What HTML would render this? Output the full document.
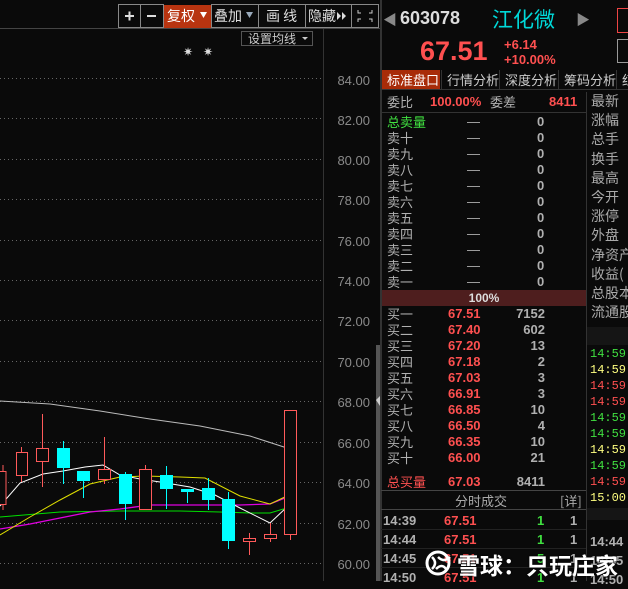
<!DOCTYPE html>
<html><head><meta charset="utf-8"><style>
*{margin:0;padding:0;box-sizing:border-box}
body{width:628px;height:581px;background:#0a0a0a;overflow:hidden;position:relative;font-family:"Liberation Sans","Noto Sans CJK SC",sans-serif;color:#c0c0c0}
.a{position:absolute;white-space:nowrap}
.cn{font-family:"Noto Sans CJK SC","WenQuanYi Zen Hei",sans-serif}
.btn{position:absolute;top:4px;height:24px;border:1px solid #888;color:#ddd;font-size:14px;line-height:22px;text-align:center;font-family:"Noto Sans CJK SC",sans-serif;white-space:nowrap;overflow:hidden}
.r{color:#ff5050}.g{color:#40e040}.y{color:#ffff80}.gr{color:#b0b0b0}
.ob{position:absolute;font-size:13px;line-height:16px;height:16px}
.mono{font-family:"Liberation Mono","DejaVu Sans Mono",monospace}
</style></head><body>
<svg class="a" style="left:0;top:0" width="381" height="581">
<line x1="0" y1="28.5" x2="381" y2="28.5" stroke="#444"/>
<line x1="323.5" y1="29" x2="323.5" y2="581" stroke="#333"/>
<rect x="376" y="345" width="4" height="236" fill="#555"/>
<g stroke="#666" stroke-dasharray="1,3">
<line x1="0" y1="78.5" x2="323" y2="78.5"/><line x1="0" y1="118.5" x2="323" y2="118.5"/><line x1="0" y1="159.5" x2="323" y2="159.5"/><line x1="0" y1="199.5" x2="323" y2="199.5"/><line x1="0" y1="240.5" x2="323" y2="240.5"/><line x1="0" y1="280.5" x2="323" y2="280.5"/><line x1="0" y1="320.5" x2="323" y2="320.5"/><line x1="0" y1="361.5" x2="323" y2="361.5"/><line x1="0" y1="401.5" x2="323" y2="401.5"/><line x1="0" y1="442.5" x2="323" y2="442.5"/><line x1="0" y1="482.5" x2="323" y2="482.5"/><line x1="0" y1="523.5" x2="323" y2="523.5"/><line x1="0" y1="563.5" x2="323" y2="563.5"/>
</g>
<g font-family="Liberation Sans" font-size="13" fill="#8a8a8a" text-anchor="end">
<text x="370" y="85">84.00</text><text x="370" y="125">82.00</text><text x="370" y="165">80.00</text><text x="370" y="205">78.00</text><text x="370" y="246">76.00</text><text x="370" y="286">74.00</text><text x="370" y="326">72.00</text><text x="370" y="367">70.00</text><text x="370" y="407">68.00</text><text x="370" y="448">66.00</text><text x="370" y="488">64.00</text><text x="370" y="529">62.00</text><text x="370" y="569">60.00</text>
</g>
<polyline fill="none" stroke="#bbb" points="0,401 50,404 100,411 150,419 200,426 250,436 287,448"/>
<polyline fill="none" stroke="#00e000" points="0,517 60,512 120,511 180,511 220,512 250,513 270,513 290,507"/>
<polyline fill="none" stroke="#e000e0" stroke-width="1.3" points="0,529 30,524 60,518 90,512 120,509 150,505 180,505 210,505 240,505 270,504 290,496"/>
<polyline fill="none" stroke="#e0e000" points="0,535 30,517 60,500 90,484 120,477 145,476 180,477 205,478 240,496 270,504 287,496"/>
<polyline fill="none" stroke="#fff" points="0,506 20,483 43,474 63,471 85,467 103,465 120,475 140,479 160,482 190,487 215,495 240,508 270,523 287,507"/>
<g stroke="#ff5a5a" fill="#0a0a0a">
<line x1="3" y1="465" x2="3" y2="510"/><rect x="-5" y="471.5" width="11" height="33"/>
<line x1="21.5" y1="447" x2="21.5" y2="482"/><rect x="16.5" y="452.5" width="11" height="23"/>
<line x1="42.5" y1="414" x2="42.5" y2="487"/><rect x="36.5" y="448.5" width="12" height="13"/>
<line x1="104.5" y1="437" x2="104.5" y2="484"/><rect x="98.5" y="469.5" width="12" height="10"/>
<line x1="145.5" y1="465" x2="145.5" y2="510"/><rect x="139.5" y="469.5" width="12" height="40"/>
<line x1="249.5" y1="533" x2="249.5" y2="555"/><rect x="243.5" y="538.5" width="12" height="3"/>
<line x1="270.5" y1="523" x2="270.5" y2="542"/><rect x="264.5" y="534.5" width="12" height="4"/>
<line x1="290.5" y1="534" x2="290.5" y2="540"/><rect x="284.5" y="410.5" width="12" height="124"/>
</g>
<g fill="#00ffff" stroke="#00ffff">
<line x1="63.5" y1="441" x2="63.5" y2="484"/><rect x="57" y="448" width="13" height="20" stroke="none"/>
<line x1="83.5" y1="471" x2="83.5" y2="498"/><rect x="77" y="471" width="13" height="10" stroke="none"/>
<line x1="125.5" y1="472" x2="125.5" y2="520"/><rect x="119" y="474" width="13" height="30" stroke="none"/>
<line x1="166.5" y1="466" x2="166.5" y2="509"/><rect x="160" y="475" width="13" height="14" stroke="none"/>
<line x1="187.5" y1="489" x2="187.5" y2="503"/><rect x="181" y="489" width="13" height="3" stroke="none"/>
<line x1="208.5" y1="478" x2="208.5" y2="510"/><rect x="202" y="488" width="13" height="12" stroke="none"/>
<line x1="228.5" y1="492" x2="228.5" y2="549"/><rect x="222" y="499" width="13" height="42" stroke="none"/>
</g>
<rect x="241.5" y="31.5" width="71" height="14" fill="none" stroke="#555"/>
<text x="248" y="43" font-size="12" fill="#ccc" font-family="Noto Sans CJK SC">设置均线</text>
<path d="M302 37h6l-3 3z" fill="#ccc"/>
<text x="188" y="56" font-size="12" fill="#ddd" text-anchor="middle">✷</text>
<text x="208" y="56" font-size="12" fill="#ddd" text-anchor="middle">✷</text>
<path d="M376 400l4 -4v10z" fill="#ccc"/>
<g stroke="#888" fill="none">
<rect x="118.5" y="4.5" width="22" height="23"/><rect x="140.5" y="4.5" width="23" height="23"/>
<rect x="211.5" y="4.5" width="47" height="23"/><rect x="258.5" y="4.5" width="47" height="23"/>
<rect x="305.5" y="4.5" width="46" height="23"/><rect x="351.5" y="4.5" width="27" height="23"/>
</g>
<rect x="164" y="5" width="47" height="23" fill="#b83410"/>
<path d="M125 16h9M129.5 11.5v9" stroke="#ddd" stroke-width="2"/>
<path d="M147 16h9" stroke="#ddd" stroke-width="2"/>
<path d="M200 12h7l-3.5 6z" fill="#fff"/>
<path d="M246 12h7l-3.5 6z" fill="#9ab"/>
<path d="M337 12l4 4-4 4zM342 12l4 4-4 4z" fill="#ddd"/>
<path d="M358 10v3h3M372 10v3h-3M358 22v-3h3M372 22v-3h-3" stroke="#ccc" fill="none"/>
<g font-family="Noto Sans CJK SC" font-size="14" fill="#ddd">
<text x="167" y="21" fill="#fff">复权</text>
<text x="214" y="21">叠加</text>
<text x="266" y="21">画 线</text>
<text x="308" y="21">隐藏</text>
</g>
</svg>

<div class="a" style="left:380px;top:0;width:2px;height:581px;background:#333"></div>
<div class="a" style="left:586px;top:92px;width:1px;height:489px;background:#333"></div>
<div class="a" style="left:381px;top:89px;width:247px;height:1px;background:#333"></div>
<div class="a" style="left:383px;top:10px;font-size:14px;color:#888">◀</div>
<div class="a" style="left:400px;top:8px;font-size:18px;font-weight:bold;color:#ddd">603078</div>
<div class="a cn" style="left:492px;top:4px;font-size:21px;color:#00d8d8">江化微</div>
<div class="a" style="left:576px;top:10px;font-size:14px;color:#888">▶</div>
<div class="a" style="left:617px;top:8px;width:14px;height:25px;border:1px solid #e44"></div>
<div class="a" style="left:617px;top:39px;width:14px;height:24px;border:1px solid #999"></div>
<div class="a" style="left:420px;top:36px;font-size:27px;font-weight:bold;color:#ff5050">67.51</div>
<div class="a" style="left:504px;top:37px;font-size:13px;font-weight:bold;color:#ff5050;line-height:15px">+6.14<br>+10.00%</div>
<div class="a cn" style="left:381px;top:70px;width:247px;height:20px;font-size:13px;line-height:19px;color:#ccc">
<span class="a" style="left:1px;width:58px;height:19px;background:#a82c08;color:#fff;padding-left:5px">标准盘口</span>
<span class="a" style="left:60px;padding-left:5px;border-left:1px solid #333">行情分析</span>
<span class="a" style="left:118px;padding-left:5px;border-left:1px solid #333">深度分析</span>
<span class="a" style="left:177px;padding-left:5px;border-left:1px solid #333">筹码分析</span>
<span class="a" style="left:235px;padding-left:5px;border-left:1px solid #333">红</span>
</div>
<div class="a" style="left:381px;top:112px;width:205px;height:1px;background:#333"></div>
<div class="ob cn gr" style="left:387px;top:94px">委比</div>
<div class="ob r" style="left:430px;top:94px;font-weight:bold">100.00%</div>
<div class="ob cn gr" style="left:490px;top:94px">委差</div>
<div class="ob r" style="left:549px;top:94px;font-weight:bold">8411</div>
<div class="a cn" style="left:591px;top:92px;font-size:14px;line-height:19.2px;color:#aaa">最新<br>涨幅<br>总手<br>换手<br>最高<br>今开<br>涨停<br>外盘<br>净资产<br>收益(<br>总股本<br>流通股</div>
<div class="ob cn g" style="left:387px;top:114px">总卖量</div>
<div class="a cn gr" style="left:387px;top:130px;font-size:13px;line-height:16px">卖十<br>卖九<br>卖八<br>卖七<br>卖六<br>卖五<br>卖四<br>卖三<br>卖二<br>卖一</div>
<div class="a gr" style="left:467px;top:114px;font-size:13px;line-height:16px">—<br>—<br>—<br>—<br>—<br>—<br>—<br>—<br>—<br>—<br>—</div>
<div class="a gr" style="left:537px;top:114px;font-size:13px;line-height:16px;font-weight:bold">0<br>0<br>0<br>0<br>0<br>0<br>0<br>0<br>0<br>0<br>0</div>
<div class="a" style="left:382px;top:290px;width:204px;height:16px;background:#4e1e1e;color:#ddd;font-size:12px;font-weight:bold;text-align:center;line-height:16px">100%</div>
<div class="a cn gr" style="left:387px;top:306px;font-size:13px;line-height:16px">买一<br>买二<br>买三<br>买四<br>买五<br>买六<br>买七<br>买八<br>买九<br>买十</div>
<div class="a r" style="left:448px;top:306px;font-size:13px;line-height:16px;font-weight:bold">67.51<br>67.40<br>67.20<br>67.18<br>67.03<br>66.91<br>66.85<br>66.50<br>66.35<br>66.00</div>
<div class="a gr" style="left:495px;top:306px;width:50px;text-align:right;font-size:13px;line-height:16px;font-weight:bold">7152<br>602<br>13<br>2<br>3<br>3<br>10<br>4<br>10<br>21</div>
<div class="ob cn r" style="left:387px;top:474px">总买量</div>
<div class="ob r" style="left:448px;top:474px;font-weight:bold">67.03</div>
<div class="ob gr" style="left:495px;top:474px;width:50px;text-align:right;font-weight:bold">8411</div>
<div class="a" style="left:381px;top:490px;width:205px;height:1px;background:#444"></div>
<div class="a cn" style="left:455px;top:491px;font-size:13px;color:#aaa">分时成交</div>
<div class="a cn" style="left:560px;top:491px;font-size:13px;color:#aaa">[详]</div>
<div class="a" style="left:381px;top:509px;width:205px;height:1px;background:#444"></div>
<div class="a" style="left:381px;top:529px;width:205px;height:1px;background:#222"></div>
<div class="a" style="left:381px;top:548px;width:205px;height:1px;background:#222"></div>
<div class="a" style="left:381px;top:567px;width:205px;height:1px;background:#222"></div>
<div class="a gr" style="left:383px;top:511px;font-size:13px;line-height:19px;font-weight:bold">14:39<br>14:44<br>14:45<br>14:50</div>
<div class="a r" style="left:444px;top:511px;font-size:13px;line-height:19px;font-weight:bold">67.51<br>67.51<br>67.51<br>67.51</div>
<div class="a g" style="left:537px;top:511px;font-size:13px;line-height:19px;font-weight:bold">1<br>1<br>5<br>1</div>
<div class="a gr" style="left:570px;top:511px;font-size:13px;line-height:19px;font-weight:bold">1<br>1<br>1<br>1</div>
<div class="a" style="left:587px;top:327px;width:41px;height:18px;background:#151515"></div>
<div class="a" style="left:587px;top:508px;width:41px;height:12px;background:#151515"></div>
<div class="a mono" style="left:590px;top:346px;font-size:12px;line-height:16px">
<span class="g">14:59:5</span><br><span class="y">14:59:5</span><br><span class="r">14:59:5</span><br><span class="r">14:59:5</span><br><span class="g">14:59:5</span><br><span class="g">14:59:5</span><br><span class="y">14:59:5</span><br><span class="g">14:59:5</span><br><span class="r">14:59:5</span><br><span class="y">15:00:0</span></div>
<div class="a gr" style="left:590px;top:532px;font-size:13px;line-height:19px;font-weight:bold">14:44<br>14:45<br>14:50</div>
<svg class="a" style="left:424px;top:549px" width="28" height="28"><circle cx="14" cy="14" r="11" fill="none" stroke="#fff" stroke-width="3"/><path d="M8 8q6 6 0 12M14 8q6 6 12 0M12 20q6-6 10 0" fill="none" stroke="#fff" stroke-width="2.5"/></svg>
<div class="a cn" style="left:457px;top:547px;font-size:23px;color:#fff;font-weight:bold;text-shadow:0 0 2px #000">雪球：只玩庄家</div>
</body></html>
